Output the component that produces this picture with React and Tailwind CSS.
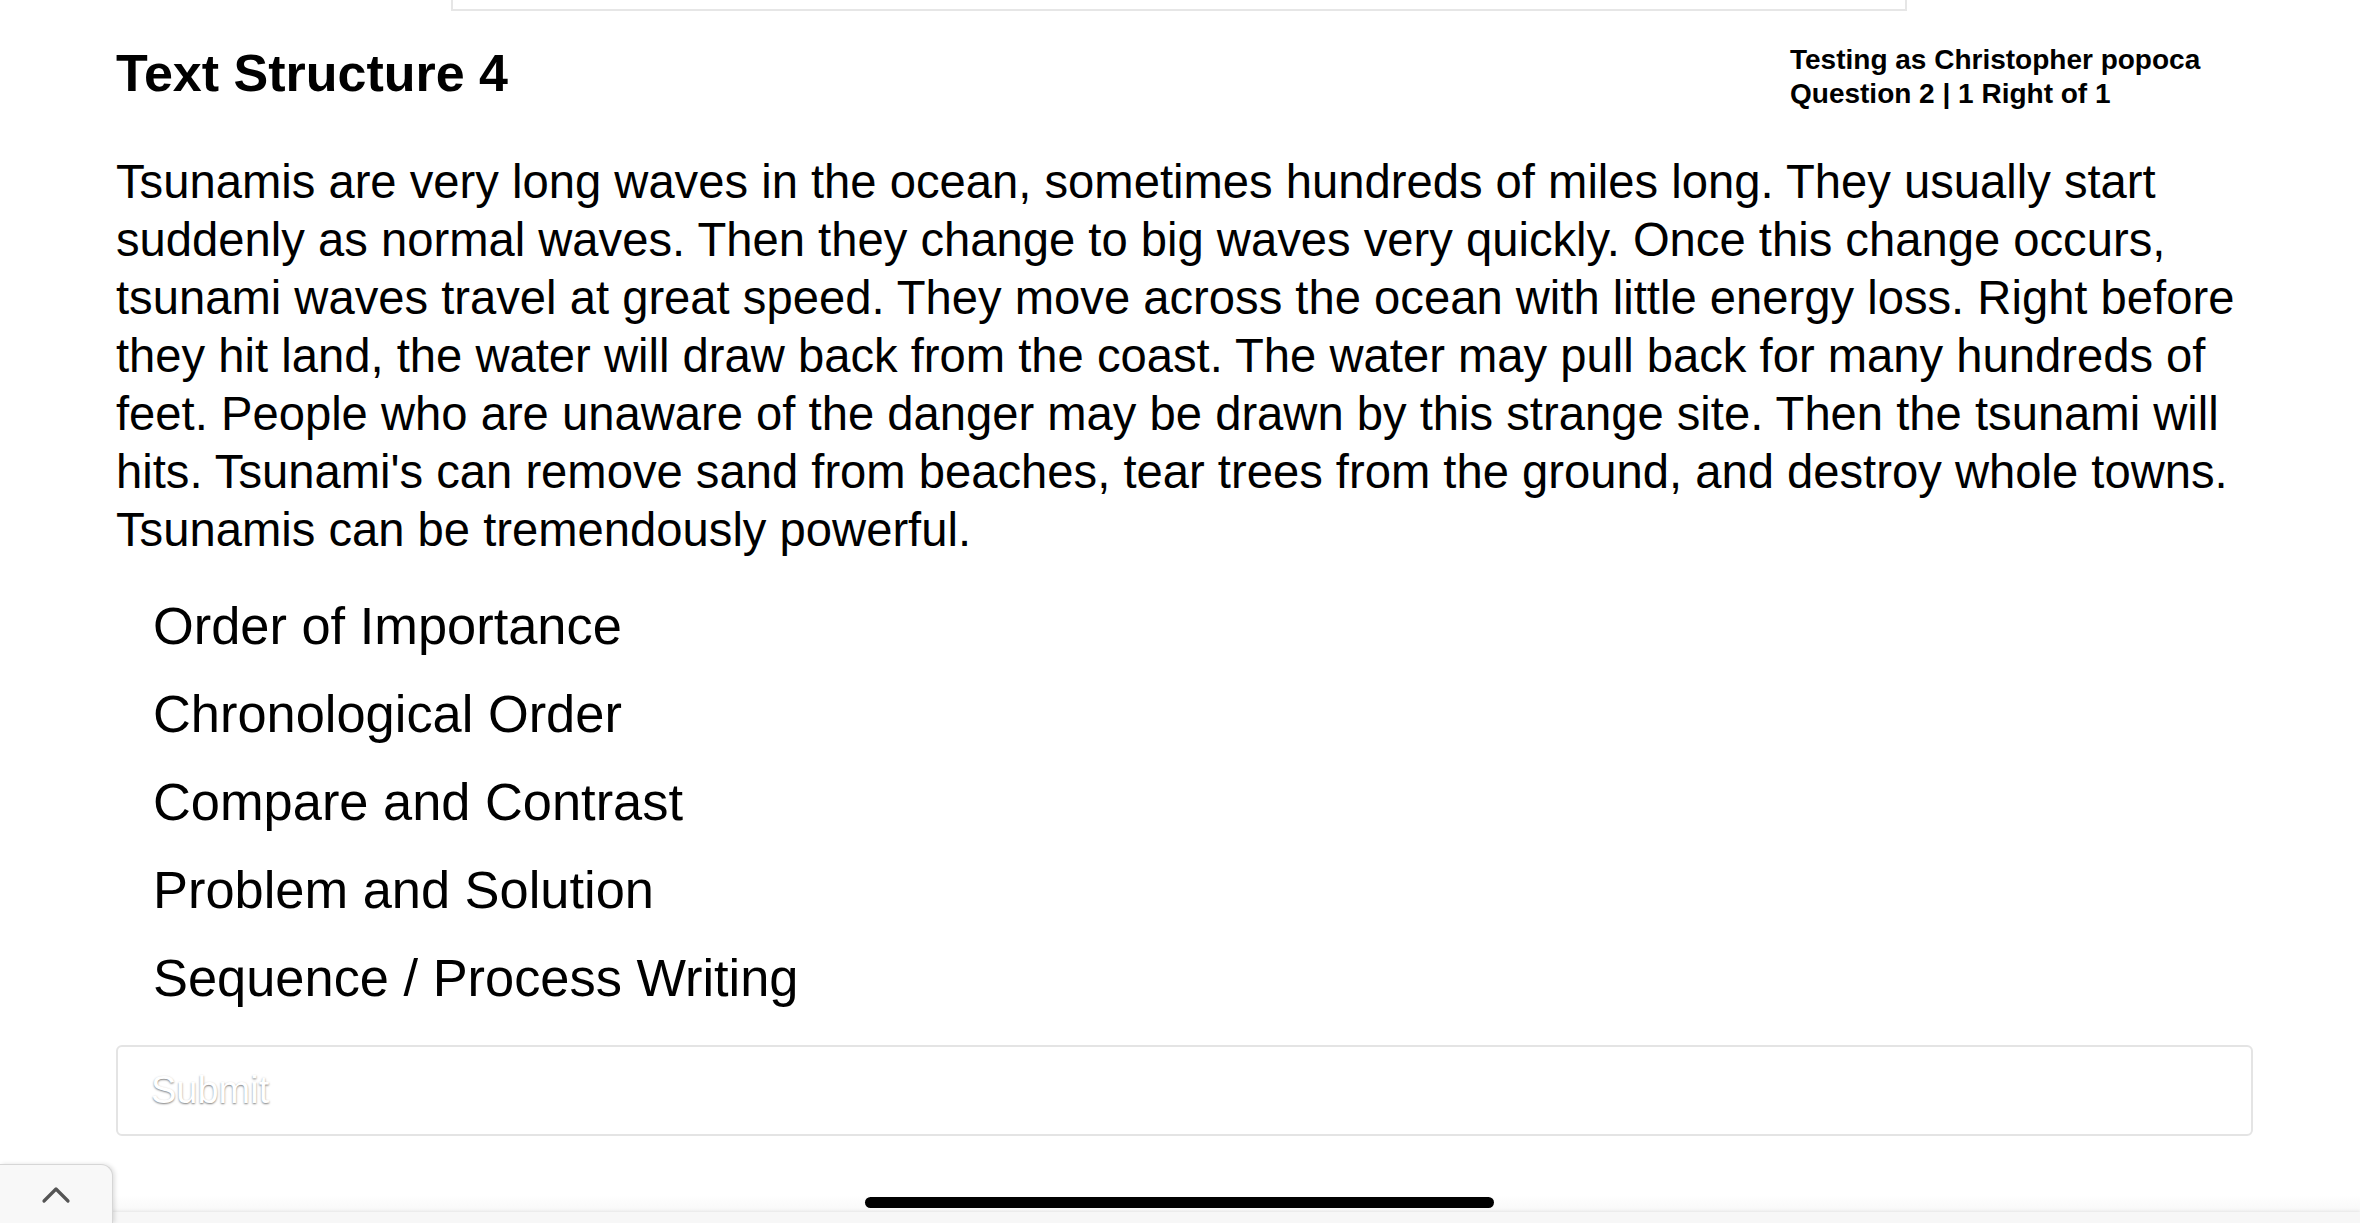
import React from 'react'

const options = [
  'Order of Importance',
  'Chronological Order',
  'Compare and Contrast',
  'Problem and Solution',
  'Sequence / Process Writing',
]

export default function App() {
  return (
    <div className="relative min-h-screen overflow-hidden bg-white text-black [font-family:'Liberation_Sans',Arial,sans-serif]">
      {/* bottom edge of the box above, cut off by the scroll */}
      <div className="ml-[451px] h-[11px] w-[1456px] border-x-2 border-b-2 border-[#e6e6e6]" />

      <div className="pl-[116px] pr-[107px]">
        <div className="mt-[32px] flex items-start justify-between">
          <h1 className="text-[52px] font-bold leading-[60px]">Text Structure 4</h1>
          <div className="w-[463px] text-[28px] font-bold leading-[34px]">
            <p>Testing as Christopher popoca</p>
            <p>Question 2 | 1 Right of 1</p>
          </div>
        </div>

        <p className="mt-[42px] text-[47.2px] leading-[58px]">
          Tsunamis are very long waves in the ocean, sometimes hundreds of miles long. They usually start
          suddenly as normal waves. Then they change to big waves very quickly. Once this change occurs,
          tsunami waves travel at great speed. They move across the ocean with little energy loss. Right before
          they hit land, the water will draw back from the coast. The water may pull back for many hundreds of
          feet. People who are unaware of the danger may be drawn by this strange site. Then the tsunami will
          hits. Tsunami's can remove sand from beaches, tear trees from the ground, and destroy whole towns.
          Tsunamis can be tremendously powerful.
        </p>

        <ul className="mt-[23px] pl-[37px]">
          {options.map((o) => (
            <li key={o} className="text-[52.4px] leading-[88px]">
              {o}
            </li>
          ))}
        </ul>

        <button className="mt-[23px] flex h-[91px] w-full items-center rounded-[6px] border-2 border-[#e4e4e4] bg-white pl-[33px] text-[38px] text-white [text-shadow:0_1px_2px_rgba(0,0,0,0.5)]">
          Submit
        </button>
      </div>

      {/* browser chrome at the bottom */}
      <div className="absolute inset-x-0 bottom-0 h-[28px] bg-gradient-to-b from-white/0 to-[#ececec]/60" />
      <div className="absolute inset-x-0 bottom-0 h-[11px] bg-[#f7f7f7] shadow-[0_-1px_3px_rgba(0,0,0,0.08)]" />
      <div className="absolute bottom-0 left-0 flex h-[59px] w-[113px] items-start justify-center rounded-tr-[12px] border-t border-r border-[#d6d6d6] bg-[#f8f8f8] pt-[19px] shadow-[2px_0_4px_rgba(0,0,0,0.12)]">
        <svg width="30" height="20" viewBox="0 0 30 20" fill="none">
          <polyline points="3,17 15,5 27,17" stroke="#555" strokeWidth="3.2" strokeLinecap="round" strokeLinejoin="round" />
        </svg>
      </div>
      <div className="absolute left-[865px] top-[1197px] h-[11px] w-[629px] rounded-full bg-black" />
    </div>
  )
}
